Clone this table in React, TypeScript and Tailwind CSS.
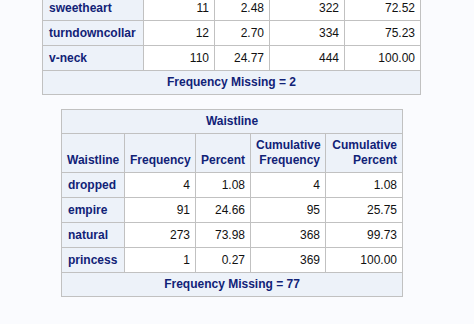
const necklineRows = [
	["sweetheart", "11", "2.48", "322", "72.52"],
	["turndowncollar", "12", "2.70", "334", "75.23"],
	["v-neck", "110", "24.77", "444", "100.00"],
];

const waistRows = [
	["dropped", "4", "1.08", "4", "1.08"],
	["empire", "91", "24.66", "95", "25.75"],
	["natural", "273", "73.98", "368", "99.73"],
	["princess", "1", "0.27", "369", "100.00"],
];

const hd = "border border-[#c1c1c1] bg-[#edf2f9] text-[#112277] font-bold";
const num = "border border-[#c1c1c1] bg-white text-[#111] text-right px-[5px]";

function Body({ rows }: { rows: string[][] }) {
	return (
		<>
			{rows.map((r) => (
				<tr key={r[0]} className="h-[25px]">
					<th className={`${hd} text-left px-[6px]`}>{r[0]}</th>
					{r.slice(1).map((v, i) => (
						<td key={i} className={num}>
							{v}
						</td>
					))}
				</tr>
			))}
		</>
	);
}

export default function App() {
	return (
		<div className="w-[474px] h-[324px] overflow-hidden bg-[#fafbfe] font-['Liberation_Sans',Arial,sans-serif] text-[12px] leading-[15px]">
			<div className="-mt-[5px] ml-[42px]">
				<table className="border-collapse border border-[#b4b4b4] w-[378px] table-fixed">
					<colgroup>
						<col className="w-[101px]" />
						<col className="w-[71px]" />
						<col className="w-[55px]" />
						<col className="w-[75px]" />
						<col className="w-[76px]" />
					</colgroup>
					<tbody>
						<Body rows={necklineRows} />
						<tr className="h-[24px]">
							<td colSpan={5} className={`${hd} text-center`}>
								Frequency Missing = 2
							</td>
						</tr>
					</tbody>
				</table>
			</div>

			<div className="mt-[14px] ml-[61px]">
				<table className="border-collapse border border-[#b4b4b4] w-[341px] table-fixed">
					<colgroup>
						<col className="w-[63px]" />
						<col className="w-[71px]" />
						<col className="w-[55px]" />
						<col className="w-[75px]" />
						<col className="w-[77px]" />
					</colgroup>
					<thead>
						<tr className="h-[24px]">
							<th colSpan={5} className={`${hd} text-center`}>
								Waistline
							</th>
						</tr>
						<tr className="h-[39px]">
							<th className={`${hd} text-left px-[5px] align-bottom pb-[4px]`}>Waistline</th>
							<th className={`${hd} text-right px-[5px] align-bottom pb-[4px]`}>Frequency</th>
							<th className={`${hd} text-right px-[5px] align-bottom pb-[4px]`}>Percent</th>
							<th className={`${hd} text-right px-[5px] align-bottom pb-[4px]`}>Cumulative Frequency</th>
							<th className={`${hd} text-right px-[5px] align-bottom pb-[4px]`}>Cumulative Percent</th>
						</tr>
					</thead>
					<tbody>
						<Body rows={waistRows} />
						<tr className="h-[24px]">
							<td colSpan={5} className={`${hd} text-center`}>
								Frequency Missing = 77
							</td>
						</tr>
					</tbody>
				</table>
			</div>
		</div>
	);
}
